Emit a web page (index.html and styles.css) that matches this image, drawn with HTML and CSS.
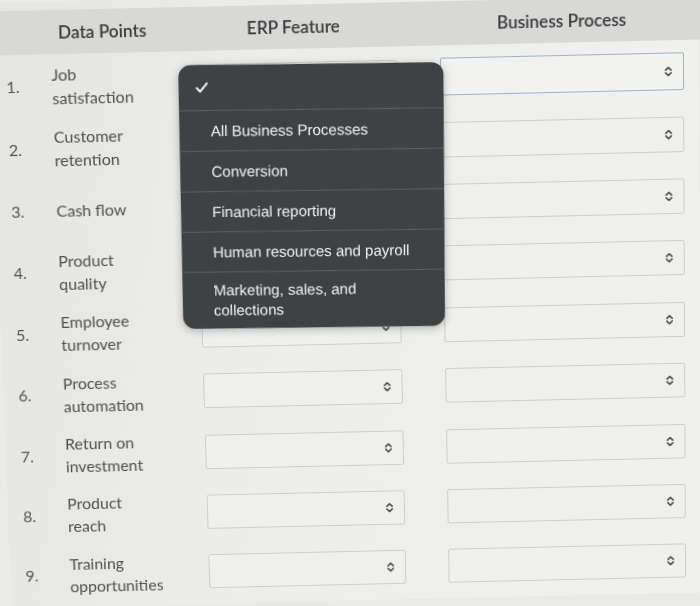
FILE: index.html
```html
<!DOCTYPE html>
<html>
<head>
<meta charset="utf-8">
<link rel="stylesheet" href="styles.css">
</head>
<body>
<div class="page">
  <div class="table">
    <div class="head">
      <div class="num"></div>
      <div class="label h">Data Points</div>
      <div class="erp h center">ERP Feature</div>
      <div class="biz h center">Business Process</div>
    </div>

    <div class="row">
      <div class="num">1.</div>
      <div class="label">Job<br>satisfaction</div>
      <div class="erp"><div class="sel"><svg class="chev" viewBox="0 0 10 14"><path d="M2 5.5 5 2.5 8 5.5M2 8.5 5 11.5 8 8.5"/></svg></div></div>
      <div class="biz"><div class="sel focus"><svg class="chev" viewBox="0 0 10 14"><path d="M2 5.5 5 2.5 8 5.5M2 8.5 5 11.5 8 8.5"/></svg></div></div>
    </div>
    <div class="row">
      <div class="num">2.</div>
      <div class="label">Customer<br>retention</div>
      <div class="erp"><div class="sel"><svg class="chev" viewBox="0 0 10 14"><path d="M2 5.5 5 2.5 8 5.5M2 8.5 5 11.5 8 8.5"/></svg></div></div>
      <div class="biz"><div class="sel"><svg class="chev" viewBox="0 0 10 14"><path d="M2 5.5 5 2.5 8 5.5M2 8.5 5 11.5 8 8.5"/></svg></div></div>
    </div>
    <div class="row">
      <div class="num">3.</div>
      <div class="label">Cash flow</div>
      <div class="erp"><div class="sel"><svg class="chev" viewBox="0 0 10 14"><path d="M2 5.5 5 2.5 8 5.5M2 8.5 5 11.5 8 8.5"/></svg></div></div>
      <div class="biz"><div class="sel"><svg class="chev" viewBox="0 0 10 14"><path d="M2 5.5 5 2.5 8 5.5M2 8.5 5 11.5 8 8.5"/></svg></div></div>
    </div>
    <div class="row">
      <div class="num">4.</div>
      <div class="label">Product<br>quality</div>
      <div class="erp"><div class="sel"><svg class="chev" viewBox="0 0 10 14"><path d="M2 5.5 5 2.5 8 5.5M2 8.5 5 11.5 8 8.5"/></svg></div></div>
      <div class="biz"><div class="sel"><svg class="chev" viewBox="0 0 10 14"><path d="M2 5.5 5 2.5 8 5.5M2 8.5 5 11.5 8 8.5"/></svg></div></div>
    </div>
    <div class="row">
      <div class="num">5.</div>
      <div class="label">Employee<br>turnover</div>
      <div class="erp"><div class="sel"><svg class="chev" viewBox="0 0 10 14"><path d="M2 5.5 5 2.5 8 5.5M2 8.5 5 11.5 8 8.5"/></svg></div></div>
      <div class="biz"><div class="sel"><svg class="chev" viewBox="0 0 10 14"><path d="M2 5.5 5 2.5 8 5.5M2 8.5 5 11.5 8 8.5"/></svg></div></div>
    </div>
    <div class="row">
      <div class="num">6.</div>
      <div class="label">Process<br>automation</div>
      <div class="erp"><div class="sel"><svg class="chev" viewBox="0 0 10 14"><path d="M2 5.5 5 2.5 8 5.5M2 8.5 5 11.5 8 8.5"/></svg></div></div>
      <div class="biz"><div class="sel"><svg class="chev" viewBox="0 0 10 14"><path d="M2 5.5 5 2.5 8 5.5M2 8.5 5 11.5 8 8.5"/></svg></div></div>
    </div>
    <div class="row">
      <div class="num">7.</div>
      <div class="label">Return on<br>investment</div>
      <div class="erp"><div class="sel"><svg class="chev" viewBox="0 0 10 14"><path d="M2 5.5 5 2.5 8 5.5M2 8.5 5 11.5 8 8.5"/></svg></div></div>
      <div class="biz"><div class="sel"><svg class="chev" viewBox="0 0 10 14"><path d="M2 5.5 5 2.5 8 5.5M2 8.5 5 11.5 8 8.5"/></svg></div></div>
    </div>
    <div class="row">
      <div class="num">8.</div>
      <div class="label">Product<br>reach</div>
      <div class="erp"><div class="sel"><svg class="chev" viewBox="0 0 10 14"><path d="M2 5.5 5 2.5 8 5.5M2 8.5 5 11.5 8 8.5"/></svg></div></div>
      <div class="biz"><div class="sel"><svg class="chev" viewBox="0 0 10 14"><path d="M2 5.5 5 2.5 8 5.5M2 8.5 5 11.5 8 8.5"/></svg></div></div>
    </div>
    <div class="row">
      <div class="num">9.</div>
      <div class="label">Training<br>opportunities</div>
      <div class="erp"><div class="sel"><svg class="chev" viewBox="0 0 10 14"><path d="M2 5.5 5 2.5 8 5.5M2 8.5 5 11.5 8 8.5"/></svg></div></div>
      <div class="biz"><div class="sel"><svg class="chev" viewBox="0 0 10 14"><path d="M2 5.5 5 2.5 8 5.5M2 8.5 5 11.5 8 8.5"/></svg></div></div>
    </div>

    <div class="menu">
      <div class="item check"><svg class="tick" viewBox="0 0 14 12"><path d="M2 6.5 5.2 10 12 2"/></svg></div>
      <div class="item">All Business Processes</div>
      <div class="item">Conversion</div>
      <div class="item">Financial reporting</div>
      <div class="item">Human resources and payroll</div>
      <div class="item last">Marketing, sales, and<br>collections</div>
    </div>
  </div>
</div>
</body>
</html>
```

FILE: styles.css
```css
html, body {
  margin: 0;
  padding: 0;
  width: 700px;
  height: 606px;
  overflow: hidden;
  background: #e6e6e4;
}

.page {
  width: 700px;
  height: 606px;
  background: linear-gradient(100deg, #e4e4e2 0%, #ededeb 45%, #f0f0ee 100%);
  box-shadow: 0 0 0 40px #e9e9e7;
  transform: rotate(-1.3deg) perspective(1000px) rotateX(-3deg);
  transform-origin: 330px 303px;
  font-family: Lato, "Open Sans", sans-serif;
  color: #4e4e4e;
}

.table {
  position: relative;
  padding-top: 8px;
}

.head {
  display: flex;
  align-items: center;
  height: 43px;
  background: #d8d8d7;
  box-shadow: -40px 0 0 #d8d8d7, 40px 0 0 #d8d8d7;
}

.row {
  display: flex;
  align-items: center;
  height: 61.4px;
}

.num {
  width: 45px;
  padding-left: 15px;
  box-sizing: border-box;
  flex: none;
  font-size: 16px;
  color: #555;
}

.label {
  width: 156px;
  flex: none;
  padding-left: 15px;
  box-sizing: border-box;
  font-size: 16px;
  line-height: 23px;
  color: #505050;
}

.label.h {
  padding-left: 0;
  margin-left: 23px;
  width: 133px;
}

.h {
  font-size: 17px;
  font-weight: 600;
  color: #3a3a3a;
}

.center { text-align: center; }

.erp {
  width: 200px;
  flex: none;
}

.biz {
  width: 241px;
  margin-left: 43px;
  flex: none;
}

.h.erp {
  padding-right: 2px;
  box-sizing: border-box;
}

.sel {
  height: 35px;
  border: 1px solid #cdcdcb;
  border-radius: 2px;
  background: #efefed;
  box-sizing: border-box;
  display: flex;
  align-items: center;
  justify-content: flex-end;
  padding-right: 10px;
}

.sel.focus {
  border-color: #9fb3c8;
  border-width: 1.5px;
  height: 37px;
  background: #f1f1ef;
}

.chev {
  width: 9px;
  height: 13px;
  fill: none;
  stroke: #4a4a4a;
  stroke-width: 1.7;
  stroke-linecap: round;
  stroke-linejoin: round;
}

.menu {
  position: absolute;
  left: 184px;
  top: 66px;
  width: 262px;
  background: #3f4245;
  border-radius: 12px;
  box-shadow: 0 2px 8px rgba(0,0,0,0.25);
  font-family: "Liberation Sans", Arial, sans-serif;
  font-size: 15px;
  color: #f2f2f2;
  overflow: hidden;
  transform: rotate(0.6deg);
}

.item {
  height: 40px;
  display: flex;
  align-items: center;
  padding-left: 31px;
  border-top: 1px solid #5d6063;
  box-sizing: border-box;
  line-height: 20px;
}

.item.check {
  height: 44px;
  border-top: none;
  padding-left: 16px;
}

.item.last {
  height: 57px;
}

.tick {
  width: 14px;
  height: 12px;
  fill: none;
  stroke: #f5f5f5;
  stroke-width: 2;
  stroke-linecap: round;
  stroke-linejoin: round;
}
```
